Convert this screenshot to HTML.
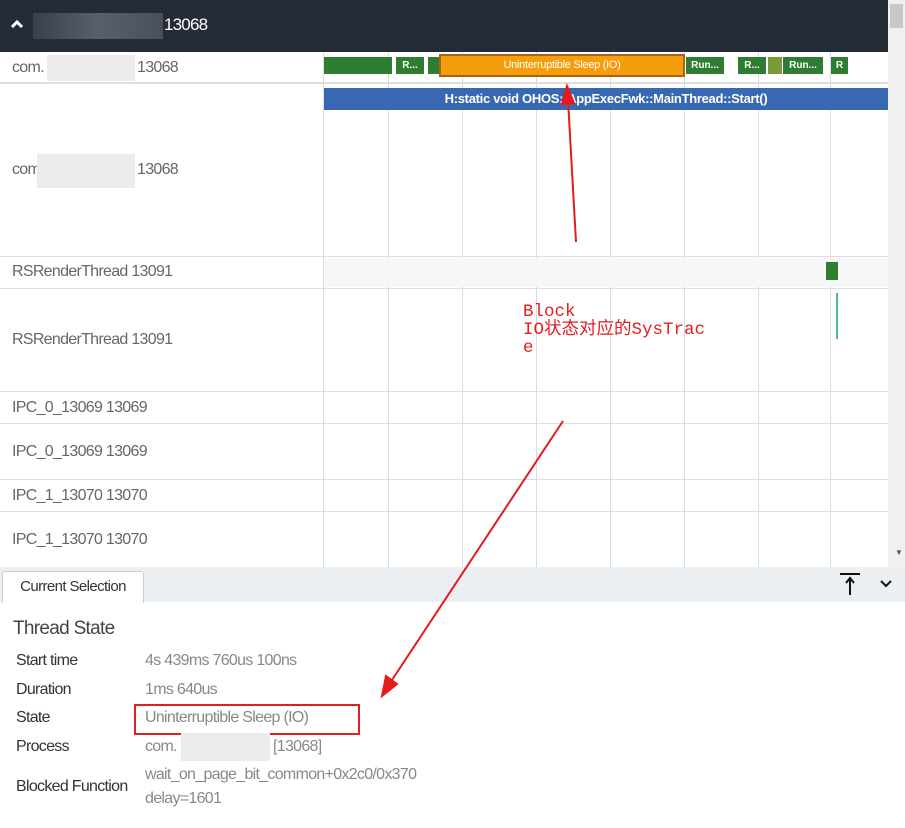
<!DOCTYPE html>
<html><head><meta charset="utf-8"><style>
body{margin:0;width:905px;height:828px;background:#fff;font-family:"Liberation Sans","Noto Sans CJK SC",sans-serif;position:relative;overflow:hidden}
.a{position:absolute}
.lbl{position:absolute;left:12px;font-size:16px;color:#666;letter-spacing:-0.7px}
.hl{position:absolute;left:0;width:888px;height:1px;background:#ddd}
.vl{position:absolute;top:52px;height:515px;width:1px;background:#d8dde3}
.blur{position:absolute;background:#ececec}
.g{position:absolute;top:57px;height:17px;background:#2f7d32;color:#fff;font-size:10px;font-weight:bold;text-align:center;line-height:17px}
.k{position:absolute;left:16px;font-size:16px;color:#333;letter-spacing:-0.7px}
.v{position:absolute;left:145px;font-size:16px;color:#888;letter-spacing:-0.7px}
</style></head><body>
<div class="a" style="left:0;top:0;width:888px;height:52px;background:#252b37"></div>
<svg class="a" style="left:10px;top:19px" width="14" height="10"><polyline points="2,8 7,3 12,8" fill="none" stroke="#fff" stroke-width="3"/></svg>
<div class="a" style="left:33px;top:13px;width:130px;height:26px;background:linear-gradient(90deg,#3a404b,#5a606a,#4a505a)"></div>
<div class="a" style="left:164px;top:15px;color:#fff;font-size:17px;letter-spacing:-0.8px">13068</div>
<div class="a" style="left:888px;top:0;width:17px;height:567px;background:#f0f0f0"></div>
<div class="a" style="left:890px;top:4px;width:13px;height:24px;background:#c8c8c8"></div>
<div class="a" style="left:895px;top:548px;font-size:8px;color:#555">▼</div>
<div class="vl" style="left:323px"></div><div class="vl" style="left:388px"></div><div class="vl" style="left:462px"></div><div class="vl" style="left:536px"></div><div class="vl" style="left:610px"></div><div class="vl" style="left:684px"></div><div class="vl" style="left:758px"></div><div class="vl" style="left:830px"></div>
<div class="hl" style="top:82px;height:2px"></div><div class="hl" style="top:256px"></div><div class="hl" style="top:288px"></div><div class="hl" style="top:391px"></div><div class="hl" style="top:423px"></div><div class="hl" style="top:479px"></div><div class="hl" style="top:511px"></div>
<div class="a" style="left:324px;top:258px;width:564px;height:29px;background:#f7f7f7"></div>
<div class="lbl" style="top:59px">com.</div><div class="blur" style="left:47px;top:55px;width:88px;height:26px"></div><div class="lbl" style="left:137px;top:59px">13068</div>
<div class="lbl" style="top:161px">com</div><div class="blur" style="left:37px;top:154px;width:98px;height:34px"></div><div class="lbl" style="left:137px;top:161px">13068</div>
<div class="lbl" style="top:263px">RSRenderThread 13091</div>
<div class="lbl" style="top:331px">RSRenderThread 13091</div>
<div class="lbl" style="top:399px">IPC_0_13069 13069</div>
<div class="lbl" style="top:443px">IPC_0_13069 13069</div>
<div class="lbl" style="top:487px">IPC_1_13070 13070</div>
<div class="lbl" style="top:531px">IPC_1_13070 13070</div>
<div class="g" style="left:324px;width:68px"></div>
<div class="g" style="left:396px;width:28px">R...</div>
<div class="g" style="left:428px;width:12px"></div>
<div class="a" style="left:439px;top:54px;width:242px;height:19px;background:#f59d0a;border:2px solid #a5651a;color:#fff;font-size:11px;text-align:center;line-height:19px;letter-spacing:-0.3px">Uninterruptible Sleep (IO)</div>
<div class="g" style="left:686px;width:38px">Run...</div>
<div class="g" style="left:738px;width:28px">R...</div>
<div class="g" style="left:768px;width:14px;background:#7a9a3a"></div>
<div class="g" style="left:783px;width:40px">Run...</div>
<div class="g" style="left:831px;width:17px">R</div>
<div class="a" style="left:324px;top:88px;width:564px;height:22px;background:#3968b2;color:#fff;font-size:13px;font-weight:bold;text-align:center;line-height:22px;letter-spacing:-0.3px">H:static void OHOS::AppExecFwk::MainThread::Start()</div>
<div class="a" style="left:826px;top:262px;width:12px;height:18px;background:#2f7d32"></div>
<div class="a" style="left:836px;top:293px;width:2px;height:46px;background:#4fb3a0"></div>
<div class="a" style="left:523px;top:303px;color:#e02020;font-family:'Liberation Mono','Noto Sans CJK SC',monospace;font-size:17.5px;line-height:18px">Block<br>IO状态对应的SysTrac<br>e</div>
<div class="a" style="left:0;top:567px;width:905px;height:35px;background:#eceff1"></div>
<div class="a" style="left:2px;top:571px;width:140px;height:31px;background:#fff;border:1px solid #ccc;border-bottom:none;border-radius:3px 3px 0 0;font-size:15px;color:#333;text-align:center;line-height:30px;letter-spacing:-0.6px">Current Selection</div>
<div class="a" style="left:840px;top:573px;width:20px;height:2px;background:#111"></div>
<svg class="a" style="left:843px;top:576px" width="14" height="20"><line x1="7" y1="3" x2="7" y2="19" stroke="#111" stroke-width="2"/><polyline points="3,7 7,2 11,7" fill="none" stroke="#111" stroke-width="2"/></svg>
<svg class="a" style="left:879px;top:579px" width="14" height="10"><polyline points="2,2 7,7 12,2" fill="none" stroke="#111" stroke-width="2"/></svg>
<div class="a" style="left:13px;top:618px;font-size:19px;color:#444;letter-spacing:-0.7px">Thread State</div>
<div class="k" style="top:652px">Start time</div><div class="v" style="top:652px">4s 439ms 760us 100ns</div>
<div class="k" style="top:681px">Duration</div><div class="v" style="top:681px">1ms 640us</div>
<div class="k" style="top:709px">State</div><div class="v" style="top:709px">Uninterruptible Sleep (IO)</div>
<div class="a" style="left:134px;top:704px;width:222px;height:27px;border:2px solid #e02020"></div>
<div class="k" style="top:738px">Process</div><div class="v" style="top:738px">com.</div><div class="blur" style="left:181px;top:733px;width:89px;height:28px"></div><div class="v" style="left:273px;top:738px">[13068]</div>
<div class="k" style="top:778px">Blocked Function</div><div class="v" style="top:766px">wait_on_page_bit_common+0x2c0/0x370</div><div class="v" style="top:790px">delay=1601</div>
<svg class="a" style="left:0;top:0" width="905" height="828"><g stroke="#e51b1b" stroke-width="2" fill="#e51b1b">
<line x1="576" y1="242" x2="568" y2="100"/><polygon points="567,86 562,104 574,103"/>
<line x1="563" y1="421" x2="390" y2="683"/><polygon points="382,696 386,676 397,684"/></g></svg>
</body></html>
